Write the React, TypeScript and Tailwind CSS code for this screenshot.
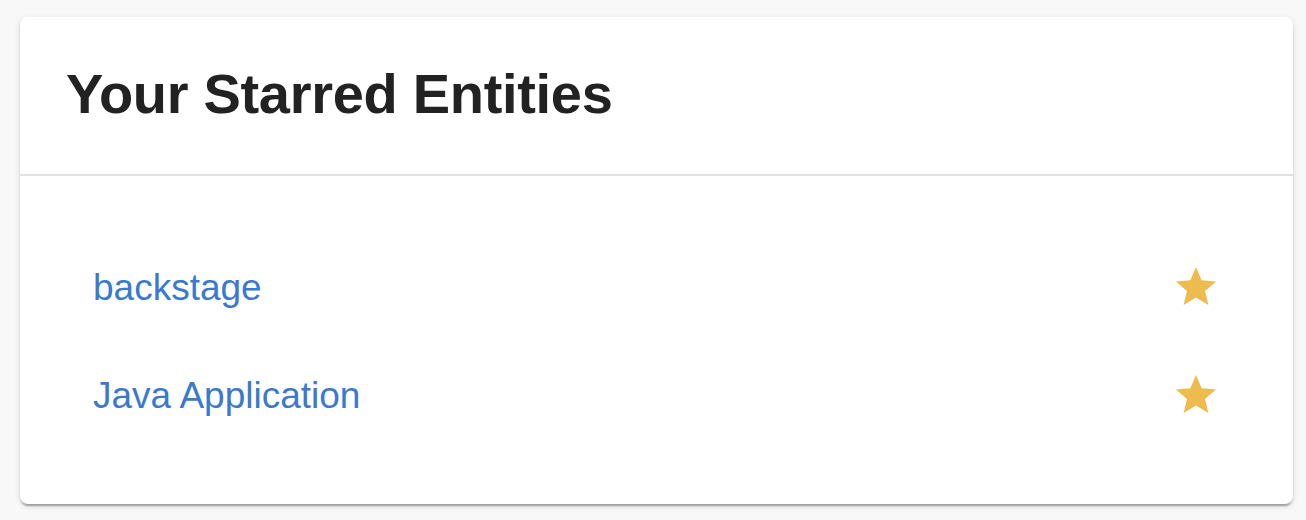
import React from "react";

const Star = () => (
  <svg viewBox="0 0 24 24" className="w-[48px] h-[48px] shrink-0" aria-hidden="true">
    <path
      fill="#eebb4e"
      d="M12 17.27L18.18 21l-1.64-7.03L22 9.24l-7.19-.61L12 2 9.19 8.63 2 9.24l5.46 4.73L5.82 21z"
    />
  </svg>
);

const items = ["backstage", "Java Application"];

export default function App() {
  return (
    <div
      className="w-[1306px] h-[520px] bg-[#f8f8f8] pt-[17px] pl-[20px]"
      style={{ fontFamily: '"Liberation Sans", Arial, Helvetica, sans-serif' }}
    >
      <div className="w-[1273px] h-[487px] bg-white rounded-[8px] shadow-[0_4px_2px_-2px_rgba(0,0,0,0.2),0_2px_2px_0_rgba(0,0,0,0.14),0_2px_6px_0_rgba(0,0,0,0.12)] flex flex-col">
        <div className="pt-[49px] pb-[52px] pl-[46px]">
          <h2 className="text-[56px] leading-[56px] font-bold tracking-[-0.3px] text-[#222222]">
            Your Starred Entities
          </h2>
        </div>
        <div className="h-[2px] bg-[#e2e2e2]" />
        <ul className="pt-[57px] flex flex-col">
          {items.map((name) => (
            <li
              key={name}
              className="h-[108px] flex items-center justify-between pl-[73px] pr-[73px]"
            >
              <a className="text-[37px] leading-[37px] text-[#3b79cf] cursor-pointer">{name}</a>
              <Star />
            </li>
          ))}
        </ul>
      </div>
    </div>
  );
}
